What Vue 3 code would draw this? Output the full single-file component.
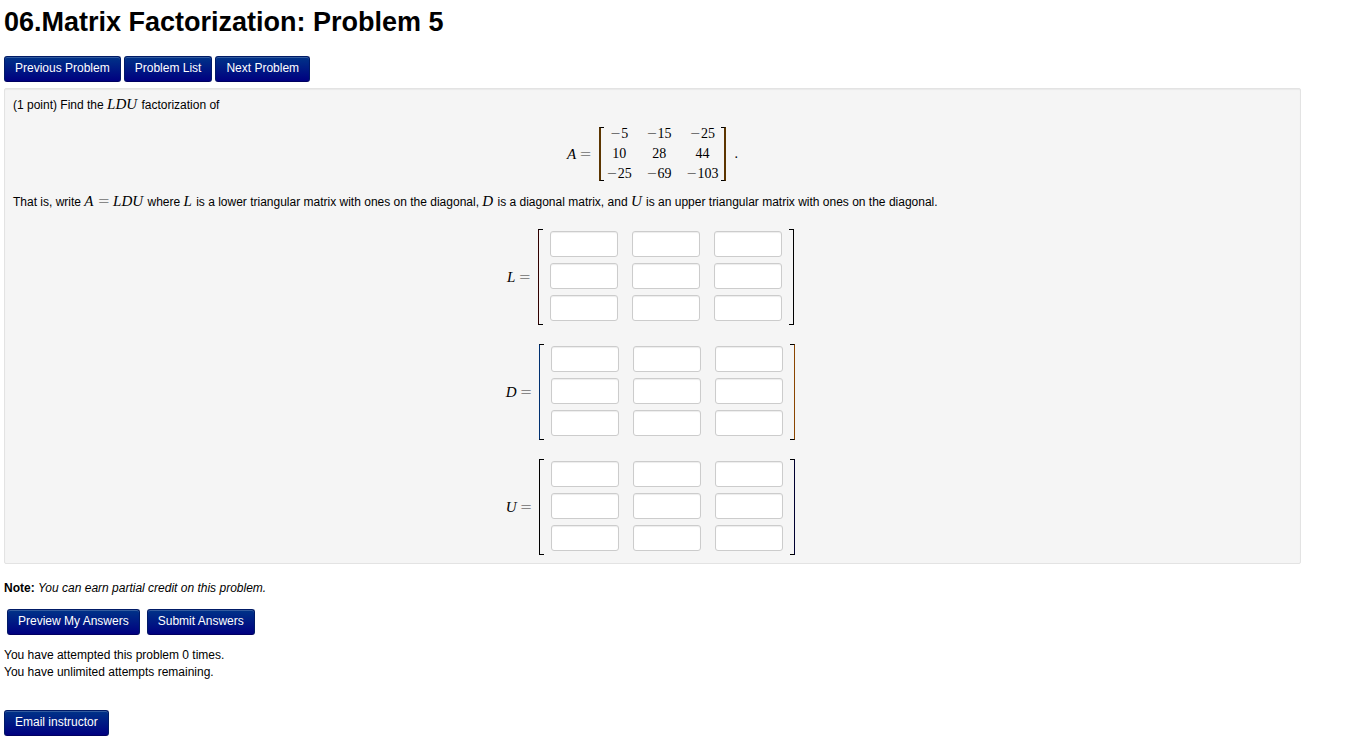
<script setup>
import { reactive } from 'vue'

const matrixA = [
  ['−5', '−15', '−25'],
  ['10', '28', '44'],
  ['−25', '−69', '−103'],
]
const matrices = ['L', 'D', 'U']
const answers = reactive({
  L: Array(9).fill(''),
  D: Array(9).fill(''),
  U: Array(9).fill(''),
})
</script>

<template>
  <main class="page">
    <h1>06.Matrix Factorization: Problem 5</h1>
    <nav class="nav">
      <a class="btn" href="#previous">Previous Problem</a>
      <a class="btn" href="#list">Problem List</a>
      <a class="btn" href="#next">Next Problem</a>
    </nav>

    <form @submit.prevent>
      <section class="problem">
        <p>(1 point) Find the <i class="var">LDU</i> factorization of</p>
        <div class="equation given">
          <i class="var">A</i><span class="op">=</span>
          <span class="bracket left"></span>
          <div class="numbers">
            <template v-for="(row, r) in matrixA" :key="r">
              <span v-for="(n, c) in row" :key="c"><span v-if="n[0] === '−'" class="minus">−</span>{{ n.replace('−', '') }}</span>
            </template>
          </div>
          <span class="bracket right"></span>
          <span class="period">.</span>
        </div>
        <p>That is, write <i class="var">A</i><span class="op">=</span><i class="var">LDU</i> where <i class="var">L</i> is a lower triangular matrix with ones on the diagonal, <i class="var">D</i> is a diagonal matrix, and <i class="var">U</i> is an upper triangular matrix with ones on the diagonal.</p>
        <div class="unknowns">
          <div v-for="m in matrices" :key="m" class="equation" :class="'matrix-' + m">
            <i class="var">{{ m }}</i><span class="op">=</span>
            <span class="bracket left"></span>
            <div class="entries">
              <input
                v-for="(v, k) in answers[m]"
                :key="k"
                v-model="answers[m][k]"
                type="text"
                :aria-label="`${m} row ${Math.floor(k / 3) + 1} column ${(k % 3) + 1}`"
              />
            </div>
            <span class="bracket right"></span>
          </div>
        </div>
      </section>

      <p class="note"><b>Note:</b> <i>You can earn partial credit on this problem.</i></p>
      <div class="actions">
        <button class="btn" type="button">Preview My Answers</button>
        <button class="btn" type="submit">Submit Answers</button>
      </div>
    </form>

    <p class="attempts">You have attempted this problem 0 times.<br />You have unlimited attempts remaining.</p>
    <button class="btn" type="button">Email instructor</button>
  </main>
</template>

<style>
body {
  margin: 0;
  background: #fff;
}
</style>

<style scoped>
.page {
  padding: 4px 49px 12px 4px;
  font: 12px/17px "Liberation Sans", Arial, sans-serif;
  color: #000;
}
h1 {
  margin: 0 0 16px;
  font-size: 27px;
  line-height: 36px;
}
p {
  margin: 0;
}
.nav {
  display: flex;
  gap: 3px;
}
.btn {
  display: inline-block;
  box-sizing: border-box;
  padding: 3px 10px 4px;
  border: 1px solid #001a66;
  border-bottom-color: #000060;
  border-radius: 3px;
  background: linear-gradient(#003388, #000080);
  box-shadow: inset 0 1px 0 rgba(255, 255, 255, 0.2);
  color: #fff;
  font: 12px/17px "Liberation Sans", Arial, sans-serif;
  text-decoration: none;
  cursor: pointer;
}
.problem {
  margin-top: 6px;
  padding: 7px 8px 8px;
  border: 1px solid #e3e3e3;
  border-radius: 2px;
  background: #f5f5f5;
  box-shadow: inset 0 1px 1px rgba(0, 0, 0, 0.05);
}
.var {
  font: italic 15px/17px "Liberation Serif", "Times New Roman", serif;
}
p .var {
  margin-right: 1px;
}
.op {
  margin: 0 3px;
  color: #333;
  font: 15px/17px "DejaVu Sans Light", "DejaVu Sans", sans-serif;
}
.equation {
  display: flex;
  align-items: center;
  justify-content: center;
}
.given {
  margin: 13px 0 12px;
}
.bracket {
  align-self: stretch;
  box-sizing: border-box;
  width: 5px;
  border: 1px solid #000;
}
.left {
  margin-left: 4px;
  border-right: 0;
}
.right {
  border-left: 0;
}
.given .left {
  border-left: 2px solid #5c3500;
}
.given .right {
  border-right: 2px solid #5c3500;
}
.numbers {
  display: grid;
  grid-template-columns: repeat(3, auto);
  gap: 6px 15px;
  padding: 0 3px;
  font: 14px/14px "Liberation Serif", "Times New Roman", serif;
  text-align: center;
}
.minus {
  font: 13px/14px "DejaVu Sans Light", "DejaVu Sans", sans-serif;
}
.period {
  margin-left: 8px;
  font: 14px/18px "Liberation Serif", serif;
}
.unknowns {
  display: flex;
  flex-direction: column;
  gap: 19px;
  margin-top: 18px;
  padding-right: 4px;
}
.entries {
  display: grid;
  grid-template-columns: repeat(3, 68px);
  gap: 6px 14px;
  padding: 2px 7px 4px;
}
.entries input {
  box-sizing: border-box;
  width: 100%;
  height: 26px;
  padding: 2px 4px;
  border: 1px solid #ccc;
  border-radius: 3px;
  background: #fff;
  box-shadow: inset 0 1px 1px rgba(0, 0, 0, 0.075);
  font: 12px/17px "Liberation Sans", Arial, sans-serif;
}
.matrix-L .left {
  border-left-color: #300000;
}
.matrix-D .left {
  border-left-color: #003070;
}
.matrix-D .right {
  border-right-color: #8a4500;
}
.matrix-U .right {
  border-right-color: #000030;
}
.note {
  margin-top: 16px;
}
.actions {
  display: flex;
  gap: 7px;
  margin: 12px 0 12px 3px;
}
.attempts {
  margin-bottom: 29px;
}
</style>
